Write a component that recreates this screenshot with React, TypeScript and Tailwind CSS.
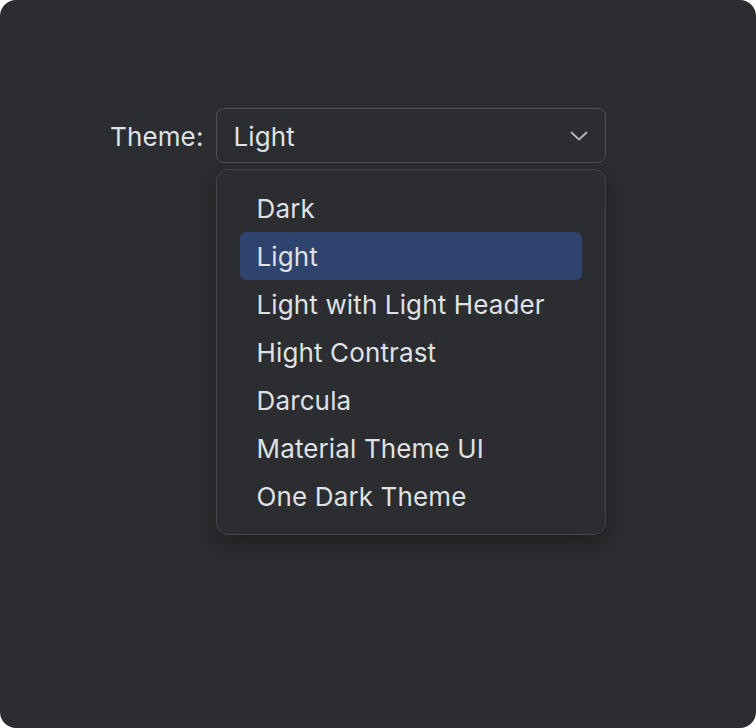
const themes = [
  "Dark",
  "Light",
  "Light with Light Header",
  "Hight Contrast",
  "Darcula",
  "Material Theme UI",
  "One Dark Theme",
];

export default function App() {
  const selected = "Light";
  return (
    <div className="w-[756px] h-[728px] bg-white">
      <div
        className="w-full h-full rounded-[16px] bg-[#2b2d30] text-[#dfe1e5] pt-[108px] pl-[110px]"
        style={{ fontFamily: "Inter, 'Noto Sans', sans-serif" }}
      >
        <div className="flex items-start gap-[12px]">
          <div className="h-[56px] flex items-center text-[26px] tracking-[0.005em]">Theme:</div>
          <div className="w-[390px] flex flex-col gap-[6px]">
            <div className="h-[55px] rounded-[8px] border border-[#4e5157] flex items-center justify-between pl-[17px] pr-[17px] text-[26px]">
              <span className="pt-[1px] tracking-[0.005em]">{selected}</span>
              <svg width="18" height="10" viewBox="0 0 18 10" fill="none">
                <path d="M1.5 1.5 9 8.5 16.5 1.5" stroke="#b4b8bf" strokeWidth="1.8" strokeLinecap="round" strokeLinejoin="round" />
              </svg>
            </div>
            <div className="rounded-[12px] border border-[#43454a] bg-[#2b2d30] py-[14px] px-[23px] shadow-[0_8px_24px_rgba(0,0,0,0.35)]">
              {themes.map((t) => (
                <div
                  key={t}
                  className={`h-[48px] flex items-center px-[17px] rounded-[6px] text-[26px] tracking-[0.005em] ${
                    t === selected ? "bg-[#2e436e]" : ""
                  }`}
                >
                  {t}
                </div>
              ))}
            </div>
          </div>
        </div>
      </div>
    </div>
  );
}
